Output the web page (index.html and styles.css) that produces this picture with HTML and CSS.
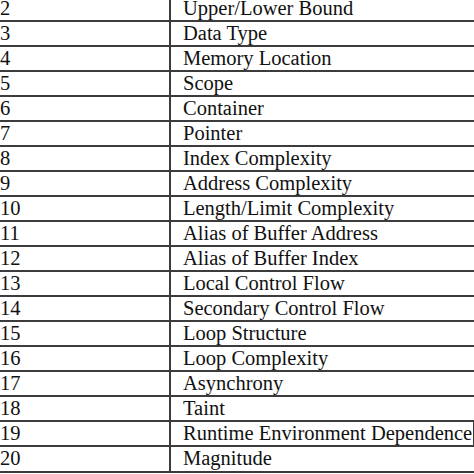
FILE: index.html
```html
<!DOCTYPE html>
<html>
<head>
<meta charset="utf-8">
<link rel="stylesheet" href="styles.css">
</head>
<body>
<div class="table">
  <div class="row"><div class="num">2</div><div class="name">Upper/Lower Bound</div></div>
  <div class="row"><div class="num">3</div><div class="name">Data Type</div></div>
  <div class="row"><div class="num">4</div><div class="name">Memory Location</div></div>
  <div class="row"><div class="num">5</div><div class="name">Scope</div></div>
  <div class="row"><div class="num">6</div><div class="name">Container</div></div>
  <div class="row"><div class="num">7</div><div class="name">Pointer</div></div>
  <div class="row"><div class="num">8</div><div class="name">Index Complexity</div></div>
  <div class="row"><div class="num">9</div><div class="name">Address Complexity</div></div>
  <div class="row"><div class="num">10</div><div class="name">Length/Limit Complexity</div></div>
  <div class="row"><div class="num">11</div><div class="name">Alias of Buffer Address</div></div>
  <div class="row"><div class="num">12</div><div class="name">Alias of Buffer Index</div></div>
  <div class="row"><div class="num">13</div><div class="name">Local Control Flow</div></div>
  <div class="row"><div class="num">14</div><div class="name">Secondary Control Flow</div></div>
  <div class="row"><div class="num">15</div><div class="name">Loop Structure</div></div>
  <div class="row"><div class="num">16</div><div class="name">Loop Complexity</div></div>
  <div class="row"><div class="num">17</div><div class="name">Asynchrony</div></div>
  <div class="row"><div class="num">18</div><div class="name">Taint</div></div>
  <div class="row"><div class="num">19</div><div class="name"><span class="boxed">Runtime Environment Dependence</span></div></div>
  <div class="row last"><div class="num">20</div><div class="name">Magnitude</div></div>
</div>
</body>
</html>
```
FILE: styles.css
```css
html, body {
  margin: 0;
  padding: 0;
  background: #ffffff;
  overflow: hidden;
  width: 474px;
  height: 474px;
}

.table {
  margin-top: -3px;
  width: 474px;
  font-family: "Liberation Serif", "Times New Roman", serif;
  font-size: 20.5px;
  color: #111111;
}

.row {
  display: grid;
  grid-template-columns: 171px 1fr;
  height: 23px;
  border-bottom: 2px solid #3c3c3c;
}

.row.last {
  height: 24px;
}

.num {
  border-right: 2px solid #3c3c3c;
  line-height: 22px;
  padding-left: 0;
  white-space: nowrap;
}

.name {
  line-height: 22px;
  padding-left: 12px;
  white-space: nowrap;
}

.boxed {
  display: inline-block;
  height: 23px;
  padding-right: 1px;
  border-right: 2px solid #3c3c3c;
}
```
